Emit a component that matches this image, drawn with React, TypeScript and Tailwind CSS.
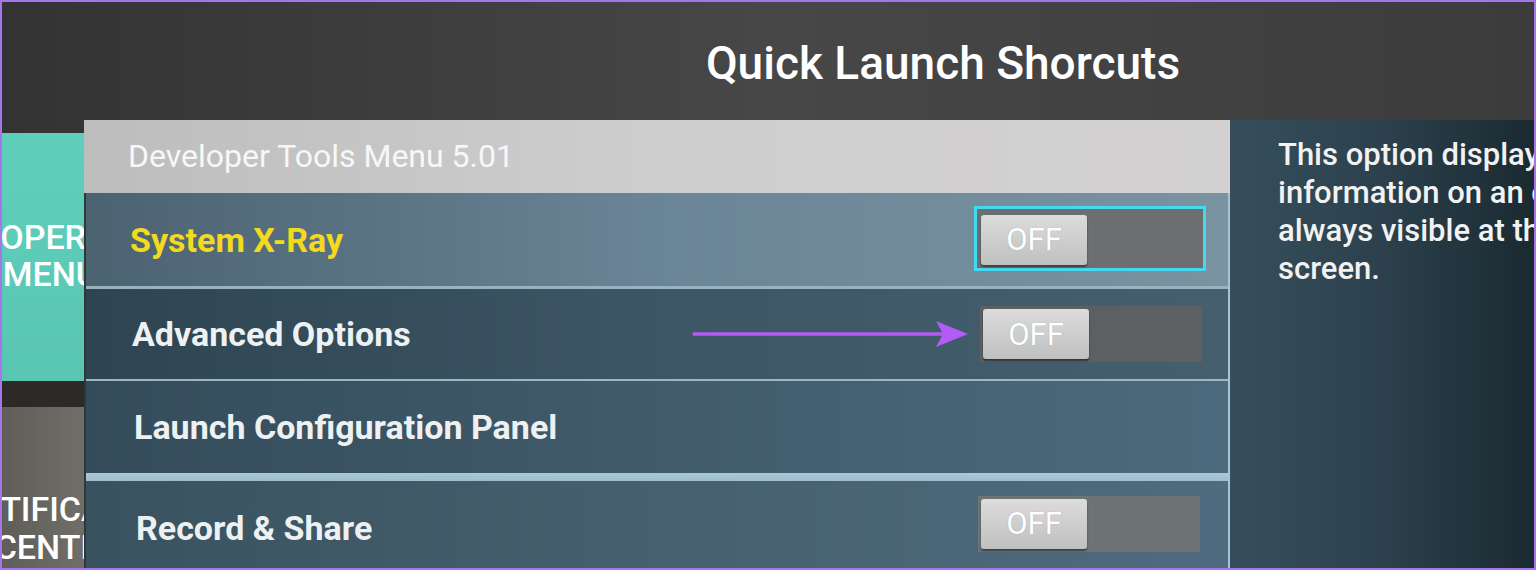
function Toggle({ focused = false, track = "bg-[#5f6466]" }: { focused?: boolean; track?: string }) {
  const knob = (
    <div className="flex h-[50px] w-[106px] items-center justify-center rounded-[3px] bg-gradient-to-b from-[#dcdcdc] to-[#bfc0c0] shadow-[0_2px_2px_rgba(0,0,0,0.45)]">
      <span className="text-[31px] leading-none text-white [text-shadow:0_0_1px_rgba(0,0,0,0.25)]">OFF</span>
    </div>
  );
  if (focused) {
    return (
      <div className="h-[65px] w-[232px] border-[3px] border-[#43d9f0] bg-[#6c6e6f] pl-[4px] pt-[6px]">
        {knob}
      </div>
    );
  }
  return <div className={`flex h-[56px] w-[222px] items-center px-[3px] ${track}`}>{knob}</div>;
}

function Arrow() {
  return (
    <svg width="280" height="32" viewBox="0 0 280 32" className="mr-[8px]">
      <line x1="2" y1="16" x2="250" y2="16" stroke="#b25cf5" strokeWidth="3.5" strokeLinecap="round" />
      <path d="M244 3 L276 16 L244 29 L251 16 Z" fill="#b25cf5" />
    </svg>
  );
}

export default function App() {
  return (
    <div className="h-[570px] w-[1536px] overflow-hidden border-2 border-[#a775e8] bg-gradient-to-r from-[#333333] via-[#474747] to-[#3c3c3c] font-['Roboto',sans-serif]">
      <div className="flex h-[118px] items-center justify-center pl-[350px] pt-[4px]">
        <h1 className="text-[46px] font-medium leading-none text-white">Quick Launch Shorcuts</h1>
      </div>

      <div className="flex h-[448px]">
        {/* previous card sliding off */}
        <div className="flex w-[82px] flex-col overflow-hidden pt-[13px]">
          <div className="flex h-[248px] flex-col justify-center bg-gradient-to-b from-[#5fcfbb] to-[#58c6b2] pb-[2px] text-[34px] font-medium leading-[37px] text-white">
            <div className="-mr-[2px] flex justify-end whitespace-nowrap">DEVELOPER</div>
            <div className="-mr-[14px] flex justify-end whitespace-nowrap">MENU</div>
          </div>
          <div className="h-[26px] bg-[#2c2a26]" />
          <div className="flex flex-1 flex-col bg-gradient-to-r from-[#5f5d58] to-[#706e68] pt-[83px] text-[34px] font-medium leading-[38px] text-white">
            <div className="-mr-[116px] flex justify-end whitespace-nowrap">NOTIFICATIONS</div>
            <div className="-mr-[37px] flex justify-end whitespace-nowrap">CENTRE</div>
          </div>
        </div>

        {/* main menu */}
        <div className="flex w-[1146px] flex-col">
          <div className="flex h-[73px] items-center bg-gradient-to-r from-[#bdbdbd] via-[#cfcece] to-[#d3d1d1] pl-[44px] pb-[2px]">
            <span className="text-[32px] leading-none text-[#f7f7f7]">Developer Tools Menu 5.01</span>
          </div>
          <div className="flex flex-1 flex-col border-r-2 border-[#a6c4d3] pl-[2px]">
            <div className="flex h-[93px] items-center justify-between bg-gradient-to-r from-[#4b6271] via-[#6a8597] to-[#7a93a1] pl-[44px] pr-[20px]">
              <span className="text-[34px] font-bold leading-none text-[#f3da1f]">System X-Ray</span>
              <div className="-mt-[3px] mr-[2px]">
                <Toggle focused />
              </div>
            </div>
            <div className="h-[3px] bg-[#98b2c0]" />
            <div className="flex h-[90px] items-center justify-between bg-gradient-to-r from-[#2e4451] via-[#3d5665] to-[#465f6f] pl-[46px] pr-[26px]">
              <span className="text-[34px] font-bold leading-none text-[#eef1f1]">Advanced Options</span>
              <div className="flex items-center">
                <Arrow />
                <Toggle track="bg-[#5c6062]" />
              </div>
            </div>
            <div className="h-[2px] bg-[#9bb7c5]" />
            <div className="flex h-[92px] items-center bg-gradient-to-r from-[#344c5a] via-[#415b6c] to-[#4c6a7d] pl-[48px]">
              <span className="text-[34px] font-bold leading-none text-[#eef1f1]">Launch Configuration Panel</span>
            </div>
            <div className="h-[8px] bg-gradient-to-b from-[#a9c8d8] to-[#9fbdcc]" />
            <div className="flex flex-1 items-center justify-between bg-gradient-to-r from-[#39525f] via-[#46606f] to-[#4f6b7f] pl-[50px] pr-[28px]">
              <span className="pt-[6px] text-[34px] font-bold leading-none text-[#eef1f1]">Record &amp; Share</span>
              <div className="mb-[2px]">
                <Toggle track="bg-[#6e7476]" />
              </div>
            </div>
          </div>
        </div>

        {/* description panel */}
        <div className="flex-1 overflow-hidden bg-gradient-to-r from-[#364e5c] via-[#2c414d] to-[#1a2a31] pl-[48px] pt-[16px]">
          <div className="text-[31px] font-medium leading-[38px] text-[#f2f2f2]">
            <div className="whitespace-nowrap">This option displays system</div>
            <div className="whitespace-nowrap">information on an overlay</div>
            <div className="whitespace-nowrap">always visible at the top of the</div>
            <div className="whitespace-nowrap">screen.</div>
          </div>
        </div>
      </div>
    </div>
  );
}
